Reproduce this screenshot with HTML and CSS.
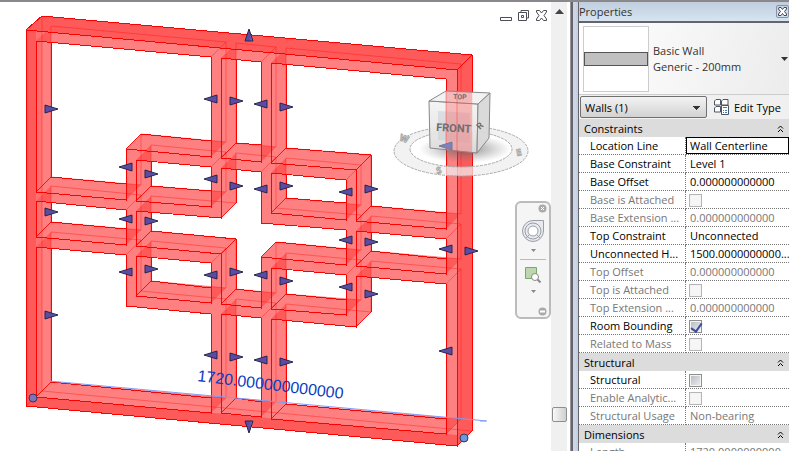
FILE: index.html
```html
<!DOCTYPE html>
<html lang="en">
<head>
    <meta charset="utf-8">
    <title>Properties - Basic Wall</title>
    <link rel="stylesheet" href="styles.css">
</head>
<body>
<div class="app">
    <main class="viewport">
        <svg class="model" width="550" height="449" viewBox="0 2 550 449">
            <defs>
                <path id="holes" d="M36 41L211 57V157L126 149V200L36 192Z M136 160L211 167V207L136 201Z M221 58L261 62V162L221 158Z M271 63L446 79V229L356 221V170L271 163Z M271 173L346 180V220L271 213Z M36 201L126 210V245L36 237Z M136 211L221 218V168L261 172V223L346 230V265L261 257V308L221 304V254L136 246Z M356 231L446 239V274L356 266Z M36 247L126 255V306L211 314V413L36 397Z M136 256L211 263V303L136 296Z M221 314L261 318V417L221 413Z M271 268L346 275V315L271 309Z M271 319L356 327V276L446 284V434L271 419Z"/>
                <path id="front" fill-rule="evenodd" clip-rule="evenodd" d="M26 30L457 70V446L26 406Z M36 41L211 57V157L126 149V200L36 192Z M136 160L211 167V207L136 201Z M221 58L261 62V162L221 158Z M271 63L446 79V229L356 221V170L271 163Z M271 173L346 180V220L271 213Z M36 201L126 210V245L36 237Z M136 211L221 218V168L261 172V223L346 230V265L261 257V308L221 304V254L136 246Z M356 231L446 239V274L356 266Z M36 247L126 255V306L211 314V413L36 397Z M136 256L211 263V303L136 296Z M221 314L261 318V417L221 413Z M271 268L346 275V315L271 309Z M271 319L356 327V276L446 284V434L271 419Z"/>
                <path id="sides" d="M36 41l15-15v151l-15 15Z M136 160l15-15v41l-15 15Z M221 58l15-15v100l-15 15Z M271 63l15-15v100l-15 15Z M356 170l15-15v51l-15 15Z M271 173l15-15v40l-15 15Z M36 201l15-15v36l-15 15Z M136 211l15-15v35l-15 15Z M221 168l15-15v50l-15 15Z M221 254l15-15v50l-15 15Z M356 231l15-15v35l-15 15Z M36 247l15-15v150l-15 15Z M136 256l15-15v40l-15 15Z M221 314l15-15v99l-15 15Z M271 268l15-15v41l-15 15Z M271 319l15-15v100l-15 15Z M356 276l15-15v51l-15 15Z"/>
                <path id="floors" d="M36 192l90 8 15-15-90-8Z M126 149l85 8 15-15-85-8Z M136 201l75 6 15-15-75-6Z M221 158l40 4 15-15-40-4Z M271 163l85 7 15-15-85-7Z M356 221l90 8 15-15-90-8Z M271 213l75 7 15-15-75-7Z M36 237l90 8 15-15-90-8Z M136 246l85 8 15-15-85-8Z M221 304l40 4 15-15-40-4Z M261 257l85 8 15-15-85-8Z M356 266l90 8 15-15-90-8Z M36 397l175 16 15-15-175-16Z M136 296l75 7 15-15-75-7Z M221 413l40 4 15-15-40-4Z M271 309l75 6 15-15-75-6Z M271 419l175 15 15-15-175-15Z"/>
                <path id="flip-right" d="M-6-4L7 0L-6 4Z"/>
                <path id="flip-left" d="M6-4L-7 0L6 4Z"/>
                <clipPath id="clip-front"><use href="#front"/></clipPath>
                <clipPath id="clip-solid"><use href="#front"/><use href="#sides"/></clipPath>
                <linearGradient id="flip-fill"><stop offset="0" stop-color="#5b4ba5"/><stop offset=".6" stop-color="#5b4ba5"/><stop offset="1" stop-color="#4d9be6"/></linearGradient>
                <linearGradient id="flip-fill-left"><stop offset="0" stop-color="#4d9be6"/><stop offset=".4" stop-color="#5b4ba5"/><stop offset="1" stop-color="#5b4ba5"/></linearGradient>
                <radialGradient id="cube-shadow"><stop offset="0" stop-color="#555" stop-opacity=".7"/><stop offset="1" stop-color="#777" stop-opacity="0"/></radialGradient>
                <linearGradient id="cube-face" x2="0" y2="1"><stop offset="0" stop-color="#f4f4f4"/><stop offset="1" stop-color="#dcdcdc"/></linearGradient>
            </defs>

            <!-- wall faces -->
            <g class="faces">
                <path d="M26 30L42 16L472 55L457 70Z M457 70L472 55V431L457 446Z"/>
                <use href="#front"/>
                <use href="#sides"/>
                <use href="#floors"/>
            </g>
            <g class="faces-deep">
                <g clip-path="url(#clip-front)"><use href="#sides"/></g>
                <g clip-path="url(#clip-solid)"><use href="#floors"/></g>
                <path fill-rule="evenodd" d="M26 30L42 16L472 55V431L457 446L26 406Z M36 31L457 70V435L36 397Z"/>
            </g>
            <path class="face-tint" d="M36 31h6V391l-6 6Z"/>

            <!-- wall edges -->
            <g class="edges-hidden">
                <use href="#holes" transform="translate(15 -15)"/>
                <path d="M42 16V391L472 431M42 391L26 406"/>
                <path d="M211 57l15-15M126 210l15-15M211 167l15-15M261 62l15-15M261 172l15-15M346 180l15-15M446 239l15-15M126 255l15-15M211 263l15-15M346 275l15-15M446 284l15-15M261 318l15-15M446 434l15-15"/>
            </g>
            <g class="edges">
                <path d="M26 30L457 70V446L26 406Z M26 30L42 16L472 55V431L457 446M457 70L472 55"/>
                <use href="#holes"/>
                <path d="M51 42V177L126 184M141 134L211 141M151 161V186L211 191M236 59V143L261 145M286 64V148L371 155V206L446 213M286 174V198L346 203M51 202V222L126 229M236 170V203M151 212V231L236 239V289L261 292M276 242L346 249M371 232V251L446 259M51 248V382L211 398M151 257V281L211 288M236 315V398L261 402M286 269V294L346 300M286 320V404L446 419M371 277V312"/>
                <path class="edge-thin" d="M36 192l15-15M136 201l15-15M126 149l15-15M221 158l15-15M271 163l15-15M356 170l15-15M356 221l15-15M271 213l15-15M36 237l15-15M136 246l15-15M221 254l15-15M221 304l15-15M356 266l15-15M36 397l15-15M136 296l15-15M221 413l15-15M271 309l15-15M271 419l15-15M221 218l15-15M261 257l15-15M356 327l15-15"/>
            </g>

            <!-- temporary dimension -->
            <path class="dim-line" d="M49 381L487 421M480 421h6"/>
            <text class="dim-text" transform="translate(197 381) rotate(7)">1720.000000000000</text>

            <!-- flip arrows -->
            <g class="flips" fill="url(#flip-fill)">
                <use href="#flip-right" x="51" y="109"/><use href="#flip-right" x="51" y="212"/><use href="#flip-right" x="51" y="315"/>
                <use href="#flip-right" x="236" y="101"/><use href="#flip-right" x="151" y="174"/><use href="#flip-right" x="236" y="186"/>
                <use href="#flip-right" x="151" y="221"/><use href="#flip-right" x="151" y="269"/><use href="#flip-right" x="236" y="272"/>
                <use href="#flip-right" x="236" y="357"/><use href="#flip-right" x="286" y="107"/><use href="#flip-right" x="286" y="186"/>
                <use href="#flip-right" x="371" y="189"/><use href="#flip-right" x="371" y="242"/><use href="#flip-right" x="286" y="281"/>
                <use href="#flip-right" x="371" y="294"/><use href="#flip-right" x="286" y="362"/><use href="#flip-right" x="471" y="251"/>
                <path d="M245 41L249 29L253 41Z"/><path d="M245 421H253L249 433Z"/>
            </g>
            <g class="flips" fill="url(#flip-fill-left)">
                <use href="#flip-left" x="211" y="99"/><use href="#flip-left" x="126" y="167"/><use href="#flip-left" x="211" y="179"/>
                <use href="#flip-left" x="126" y="219"/><use href="#flip-left" x="126" y="272"/><use href="#flip-left" x="211" y="275"/>
                <use href="#flip-left" x="211" y="355"/><use href="#flip-left" x="261" y="104"/><use href="#flip-left" x="261" y="189"/>
                <use href="#flip-left" x="346" y="192"/><use href="#flip-left" x="346" y="240"/><use href="#flip-left" x="261" y="275"/>
                <use href="#flip-left" x="346" y="287"/><use href="#flip-left" x="261" y="360"/><use href="#flip-left" x="446" y="249"/>
                <use href="#flip-left" x="446" y="351"/>
            </g>
            <circle class="grip" cx="33" cy="398" r="4"/>
            <circle class="grip grip-end" cx="464" cy="438" r="4"/>

            <!-- view cube -->
            <g class="cube">
                <path class="ring" fill-rule="evenodd" d="M394 151a67 25 0 1 1 134 0a67 25 0 1 1-134 0Z M410 149a51 18 0 1 0 102 0a51 18 0 1 0-102 0Z"/>
                <ellipse cx="465" cy="149" rx="46" ry="14" fill="url(#cube-shadow)"/>
                <g class="compass">
                    <text transform="translate(399 140) rotate(20)">W</text>
                    <text transform="translate(437 174) rotate(-12)">S</text>
                    <text transform="translate(517 156) rotate(-12)">E</text>
                </g>
                <g class="cube-faces">
                    <path fill="url(#cube-face)" d="M429 101L478 104L477 153L430 148Z"/>
                    <path fill="#f1f1f1" d="M429 101L446 91L490 93L478 104Z"/>
                    <path fill="#d8d8d8" d="M478 104L490 93L489 138L477 153Z"/>
                </g>
                <path class="cube-patch" d="M438 111L470 113V143L438 140Z"/>
                <path class="cube-wall" d="M446 91H472L472 153L446 150Z"/>
                <path class="cube-line" d="M446 91V150M457 92V151"/>
                <use class="cube-flip" href="#flip-left" x="446" y="146"/>
                <text class="cube-text" transform="translate(436 131) rotate(3)">FRONT</text>
                <text class="cube-top" transform="translate(453 99) rotate(2)">TOP</text>
                <text class="cube-side" transform="translate(480 130) rotate(-45)">R</text>
            </g>
        </svg>

        <div class="window-buttons">
            <button aria-label="Minimize"><svg width="13" height="13"><path d="M1.500 8.500h11v3H1.500Z"/></svg></button>
            <button aria-label="Restore"><svg width="13" height="13"><path d="M4 3.500V1.500H11.500V9H9.500M1.500 3.500h8v8h-8ZM4.500 6.500h2v2h-2Z"/></svg></button>
            <button aria-label="Close"><svg width="13" height="13"><path d="M1.500 1.500H4.500L6.500 4L8.500 1.500H11.500V3L9 6.500L11.500 10V11.500H8.500L6.500 9L4.500 11.500H1.500V10L4 6.500L1.500 3Z"/></svg></button>
        </div>

        <div class="navbar">
            <button class="nav-close" aria-label="Close navigation bar"><svg width="9" height="9"><circle cx="4.500" cy="4.500" r="4" fill="#aaa"/><path d="M3 3l3 3M6 3L3 6" stroke="#fff"/></svg></button>
            <button aria-label="Steering wheel"><svg width="24" height="24" fill="#e8eaee" stroke="#999fa8"><path d="M12 1.500H22.500V12A10.500 10.500 0 1 1 12 1.500Z"/><circle cx="12" cy="12" r="8"/><circle cx="12" cy="12" r="5" fill="#fff"/><path d="M8.500 15.500L5 19M15.500 15.500L19 19" /></svg></button>
            <button aria-label="Wheel options"><svg width="7" height="4"><path d="M1 0h5L3.500 3Z" fill="#888"/></svg></button>
            <hr>
            <button aria-label="Zoom region"><svg width="18" height="18" fill="none"><path d="M1.500 1.500h11v11h-11Z" fill="#bdd6b0" stroke="#79a96a"/><circle cx="11" cy="11" r="3.500" fill="#fff" stroke="#888"/><path d="M13.500 13.500l3 3" stroke="#888" stroke-width="2"/></svg></button>
            <button aria-label="Zoom options"><svg width="7" height="4"><path d="M1 0h5L3.500 3Z" fill="#888"/></svg></button>
            <button class="nav-menu" aria-label="Navigation bar options"><svg width="9" height="9"><circle cx="4.500" cy="4.500" r="4" fill="#aaa"/><path d="M2 4.500h5" stroke="#fff" stroke-width="2"/></svg></button>
        </div>
    </main>

    <div class="scrollbar">
        <svg width="9" height="5"><path d="M4.500 0L9 5H0Z" fill="#444"/></svg>
        <div class="thumb"></div>
    </div>
    <div class="splitter"></div>

    <aside class="panel">
        <header class="panel-title">
            <h1>Properties</h1>
            <button aria-label="Close panel"><svg width="9" height="9" fill="#fff" stroke="#445"><path d="M1 .5H3L4.500 2.500L6 .5H8.500V2L6.500 4.500L8.500 7V8.500H6L4.500 6.500L3 8.500H.5V7L2.500 4.500L.5 2Z"/></svg></button>
        </header>
        <button class="type-selector">
            <span class="preview"><span class="preview-wall"></span></span>
            <span class="type-name">Basic Wall<br>Generic - 200mm</span>
            <svg width="7" height="4"><path d="M0 0h7L3.500 4Z" fill="#333"/></svg>
        </button>
        <div class="filter-row">
            <select aria-label="Element filter"><option>Walls (1)</option></select>
            <button class="edit-type">
                <svg width="17" height="16" fill="#fff" stroke="#4c5561"><path d="M3 .5h4.500v5.500h-6V2ZM10 .5h5v5.500H8.500V2ZM3 7.500h4.500V13h-6V9Z"/><path d="M8.500 6.500h7v9h-7Z"/><path d="M10 8.500h4M10 11.500h1M12 11.500h2M10 13.500h1M12 13.500h2" stroke="#2f7fc4"/></svg>
                Edit Type
            </button>
        </div>
        <table class="props">
            <colgroup><col class="col-name"><col></colgroup>
            <tbody>
                <tr class="group"><th colspan="2">Constraints<button aria-label="Collapse Constraints"><svg width="7" height="8"><path d="M1 3.500l2.500-2.500L6 3.500M1 7l2.500-2.500L6 7"/></svg></button></th></tr>
                <tr class="active"><th><label for="location">Location Line</label></th><td><input type="text" id="location" value="Wall Centerline"></td></tr>
                <tr><th><label for="base">Base Constraint</label></th><td><input type="text" id="base" value="Level 1"></td></tr>
                <tr><th><label for="base-offset">Base Offset</label></th><td><input type="text" id="base-offset" value="0.000000000000"></td></tr>
                <tr><th><label for="base-attached">Base is Attached</label></th><td><input type="checkbox" id="base-attached" disabled></td></tr>
                <tr><th><label for="base-ext">Base Extension ...</label></th><td><input type="text" id="base-ext" value="0.000000000000" disabled></td></tr>
                <tr><th><label for="top">Top Constraint</label></th><td><input type="text" id="top" value="Unconnected"></td></tr>
                <tr><th><label for="height">Unconnected H...</label></th><td><input type="text" id="height" value="1500.0000000000..."></td></tr>
                <tr><th><label for="top-offset">Top Offset</label></th><td><input type="text" id="top-offset" value="0.000000000000" disabled></td></tr>
                <tr><th><label for="top-attached">Top is Attached</label></th><td><input type="checkbox" id="top-attached" disabled></td></tr>
                <tr><th><label for="top-ext">Top Extension ...</label></th><td><input type="text" id="top-ext" value="0.000000000000" disabled></td></tr>
                <tr><th><label for="room">Room Bounding</label></th><td><input type="checkbox" id="room" checked></td></tr>
                <tr><th><label for="mass">Related to Mass</label></th><td><input type="checkbox" id="mass" disabled></td></tr>
            </tbody>
            <tbody>
                <tr class="group"><th colspan="2">Structural<button aria-label="Collapse Structural"><svg width="7" height="8"><path d="M1 3.500l2.500-2.500L6 3.500M1 7l2.500-2.500L6 7"/></svg></button></th></tr>
                <tr><th><label for="structural">Structural</label></th><td><input type="checkbox" id="structural"></td></tr>
                <tr><th><label for="analytic">Enable Analytic...</label></th><td><input type="checkbox" id="analytic" disabled></td></tr>
                <tr><th><label for="usage">Structural Usage</label></th><td><input type="text" id="usage" value="Non-bearing" disabled></td></tr>
            </tbody>
            <tbody>
                <tr class="group"><th colspan="2">Dimensions<button aria-label="Collapse Dimensions"><svg width="7" height="8"><path d="M1 3.500l2.500-2.500L6 3.500M1 7l2.500-2.500L6 7"/></svg></button></th></tr>
                <tr><th><label for="length">Length</label></th><td><input type="text" id="length" value="1720.0000000000" disabled></td></tr>
            </tbody>
        </table>
    </aside>
</div>
</body>
</html>
```
FILE: styles.css
```css
* { box-sizing: border-box; }
body {
    margin: 0;
    font-family: "Open Sans", "Noto Sans", sans-serif;
    font-size: 11px;
    color: #000;
}
button {
    padding: 0;
    border: none;
    background: none;
    font: inherit;
    color: inherit;
}
svg { display: block; }
.app {
    display: grid;
    grid-template-columns: 1fr 16px 12px 210px;
    grid-template-rows: minmax(0, 1fr);
    height: 100vh;
    overflow: hidden;
    border-top: 2px solid #8a888c;
}

/* drawing area */
.viewport {
    position: relative;
    overflow: hidden;
    background: #fff;
}
.faces { fill: #ff8080; }
.faces-deep { fill: #ff5a5a; }
.face-tint { fill: #ff5a5a; opacity: 0.4; }
.edges, .edges-hidden { fill: none; stroke: #f00; }
.edges { shape-rendering: crispEdges; }
.edges-hidden { stroke-opacity: 0.35; }
.edge-thin { stroke-opacity: 0.9; }
.dim-line { fill: none; stroke: #809cf5; }
.dim-text {
    font-family: "Liberation Sans", Arial, sans-serif;
    font-size: 16px;
    fill: #0a3cc0;
}
.flips { stroke: #26264a; }
.grip { fill: #8273b8; stroke: #33375c; }
.grip-end { fill: #6c97dc; }
.ring {
    fill: #eee;
    fill-opacity: 0.75;
    stroke: #aaa;
    stroke-dasharray: 3 1;
}
.compass {
    font-size: 9px;
    font-weight: bold;
    fill: #eee;
    stroke: #aaa;
}
.cube-faces { stroke: #888; fill-opacity: 0.95; }
.cube-patch { fill: #c9ccd1; opacity: 0.5; }
.cube-wall { fill: #ff5a5a; opacity: 0.35; }
.cube-line { stroke: #f00; opacity: 0.3; }
.cube-flip { fill: #8080bb; stroke: #777799; }
.cube-text, .cube-top, .cube-side {
    font-family: Roboto, sans-serif;
    font-size: 11px;
    font-weight: bold;
    fill: #706c70;
}
.cube-top { font-size: 7px; }
.cube-side { font-size: 9px; }

.window-buttons {
    position: absolute;
    top: 7px;
    right: 3px;
    display: flex;
    gap: 5px;
}
.window-buttons svg { fill: #fff; stroke: #4c4d55; }

.navbar {
    position: absolute;
    top: 199px;
    right: 0;
    width: 36px;
    height: 118px;
    padding: 1px 2px;
    display: flex;
    flex-direction: column;
    align-items: center;
    gap: 6px;
    background: #f5f5f5;
    border: 2px solid #bbb;
    border-radius: 6px;
}
.navbar hr {
    width: 26px;
    margin: 0;
    border: none;
    border-top: 1px solid #bbb;
}
.nav-close, .nav-menu { align-self: flex-end; }
.nav-menu { margin-top: auto; }

.scrollbar {
    display: flex;
    flex-direction: column;
    align-items: center;
    padding: 7px 0 29px;
    background: #f0f0f0;
}
.thumb {
    width: 15px;
    height: 15px;
    margin-top: auto;
    border: 1px solid #8e8e8e;
    border-radius: 2px;
    background: linear-gradient(to right, #f8f8f8, #cfcfcf);
}
.splitter {
    background: linear-gradient(to right, #fff 3px, #97969a 3px 4px, #66646a 4px 6px, #cdd6e4 6px 9px, #c3d1e1 9px 11px, #66646a 11px);
}

/* properties palette */
.panel {
    display: flex;
    flex-direction: column;
    min-width: 0;
    background: #f0f0f0;
}
.panel-title {
    display: flex;
    flex-shrink: 0;
    justify-content: space-between;
    align-items: center;
    height: 21px;
    border-bottom: 2px solid #66646a;
    background: linear-gradient(#bfcddd, #d7e4f2);
}
.panel-title h1 {
    margin: 0;
    font-size: 11px;
    font-weight: normal;
    color: #333;
}
.panel-title button {
    padding: 1px;
    border: 1px solid #8a93a3;
    border-radius: 2px;
}
.type-selector {
    display: flex;
    flex-shrink: 0;
    align-items: center;
    gap: 4px;
    height: 72px;
    padding: 0 1px 0 4px;
    border-bottom: 1px solid #ccc;
    background: linear-gradient(100deg, #fff, #ececec);
    text-align: left;
    line-height: 16px;
    color: #333;
}
.preview {
    display: flex;
    align-items: center;
    width: 66px;
    height: 66px;
    border: 1px solid #ccc;
    background: #fff;
}
.preview-wall {
    width: 100%;
    height: 14px;
    border: 1px solid #555;
    background: #c0c0c0;
}
.type-name { flex: 1; }
.filter-row {
    display: flex;
    flex-shrink: 0;
    align-items: center;
    gap: 6px;
    height: 24px;
    padding: 0 0 0 1px;
}
.filter-row select {
    appearance: none;
    width: 127px;
    height: 22px;
    padding: 0 4px;
    border: 1px solid #707070;
    border-radius: 2px;
    background: linear-gradient(to bottom right, #333 50%, transparent 50%) 116px 9px / 4px 4px no-repeat,
        linear-gradient(to bottom left, #333 50%, transparent 50%) 112px 9px / 4px 4px no-repeat,
        linear-gradient(#f3f3f3, #d2d2d2);
    font: inherit;
    color: #000;
}
.edit-type {
    display: flex;
    align-items: center;
    gap: 4px;
    white-space: nowrap;
}
.props {
    width: 100%;
    table-layout: fixed;
    border-spacing: 0;
    background: #fff;
}
.col-name { width: 107px; }
.props tr { height: 18px; }
.props th, .props td {
    height: 18px;
    padding: 0;
    border-bottom: 1px dotted #777;
    font-weight: normal;
    text-align: left;
    line-height: 17px;
    white-space: nowrap;
    overflow: hidden;
}
.props th {
    padding-left: 11px;
    border-right: 1px dotted #777;
}
.props label { display: block; }
.props tr:has(:disabled) label { color: #777; }
.props .group th {
    padding-left: 5px;
    border: none;
    background: #dcdcdc;
}
.group button {
    float: right;
    margin: 5px 5px 0 0;
}
.group svg { fill: none; stroke: #000; }
.props input[type="text"] {
    display: block;
    width: 100%;
    height: 17px;
    padding: 0 0 0 4px;
    border: none;
    background: none;
    font: inherit;
    color: #000;
}
.props input[type="text"]:disabled { color: #777; }
.props .active input[type="text"] {
    padding-left: 3px;
    border: 1px solid #000;
}
.props input[type="checkbox"] {
    appearance: none;
    display: block;
    width: 13px;
    height: 13px;
    margin: 2px 0 0 3px;
    border: 1px solid #8e8f8f;
    background: linear-gradient(135deg, #b5bac2, #eee);
    box-shadow: inset 0 0 0 1px #f4f4f4;
}
.props input[type="checkbox"]:disabled {
    border-color: #b5b5b5;
    background: #f6f6f6;
}
.props input[type="checkbox"]:checked::before {
    content: "";
    display: block;
    width: 5px;
    height: 9px;
    margin: 0 0 0 3px;
    border: solid #3b4f9b;
    border-width: 0 2px 2px 0;
    transform: rotate(35deg);
}
```
